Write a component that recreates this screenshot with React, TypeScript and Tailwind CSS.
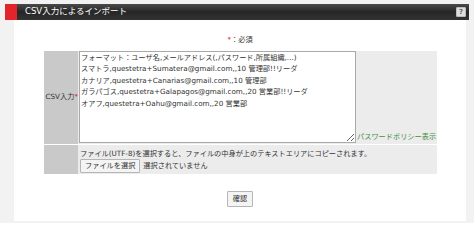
const csvText = `フォーマット：ユーザ名,メールアドレス(,パスワード,所属組織,...)
スマトラ,questetra+Sumatera@gmail.com,,10 管理部!!リーダ
カナリア,questetra+Canarias@gmail.com,,10 管理部
ガラパゴス,questetra+Galapagos@gmail.com,,20 営業部!!リーダ
オアフ,questetra+Oahu@gmail.com,,20 営業部`;

const font = { fontFamily: '"DejaVu Sans", "Noto Sans CJK JP", sans-serif' };

export default function App() {
  return (
    <div
      className="w-[474px] h-[223px] overflow-hidden bg-[#f2f2f2] text-[7.2px] leading-[11.5px] text-[#333]"
      style={font}
    >
      {/* header */}
      <div className="ml-[5px] mr-[5px] mt-[4px] flex h-[16px]">
        <div className="w-[12px] bg-[#e3242b]" />
        <div className="flex flex-1 items-center justify-between bg-gradient-to-b from-[#4a4a4a] via-[#262626] to-[#333] pl-[8px] pr-[3px]">
          <span className="text-[8.5px] text-white">CSV入力によるインポート</span>
          <span className="flex h-[10px] w-[10px] items-center justify-center rounded-[1px] border border-[#bbb] bg-[#ddd] text-[7px] font-bold leading-none text-[#666]">
            ?
          </span>
        </div>
      </div>

      {/* panel */}
      <div className="ml-[14px] mr-[8px] h-[201px] bg-white pt-[14px]">
        <div className="text-center">
          <span className="text-[#e3242b]">*</span>：必須
        </div>

        <div className="ml-[30px] mt-[5px] w-[393px]">
          <div className="grid grid-cols-[34px_1fr] gap-y-px">
            <div className="flex items-center justify-end bg-[#c9c9c9]">
              CSV入力<span className="text-[#e3242b]">*</span>
            </div>
            <div className="flex items-end bg-[#ececec] pb-[1px] pl-[1px]">
              <textarea
                readOnly
                defaultValue={csvText}
                className="h-[92px] w-[277px] shrink-0 border border-[#a9a9a9] bg-white px-[1px] py-0 text-[7.2px] leading-[11.5px] text-[#333] outline-none"
                style={font}
              />
              <span className="ml-[1px] whitespace-nowrap text-[#3f8f3f]">パスワードポリシー表示</span>
            </div>

            <div className="bg-[#c9c9c9]" />
            <div className="bg-[#ececec] pb-[1px] pl-[2px] pt-[3px]">
              <div>ファイル(UTF-8)を選択すると、ファイルの中身が上のテキストエリアにコピーされます。</div>
              <div className="flex items-center gap-[3px]">
                <span className="rounded-[1px] border border-[#b5b5b5] bg-[#f4f4f4] px-[4px] py-[1px] leading-[10px]">ファイルを選択</span>
                <span>選択されていません</span>
              </div>
            </div>
          </div>
        </div>

        <div className="mt-[17px] flex justify-center">
          <span className="rounded-[1px] border border-[#b5b5b5] bg-[#f4f4f4] px-[5px] py-[1px] leading-[12px]">確認</span>
        </div>
      </div>
    </div>
  );
}
